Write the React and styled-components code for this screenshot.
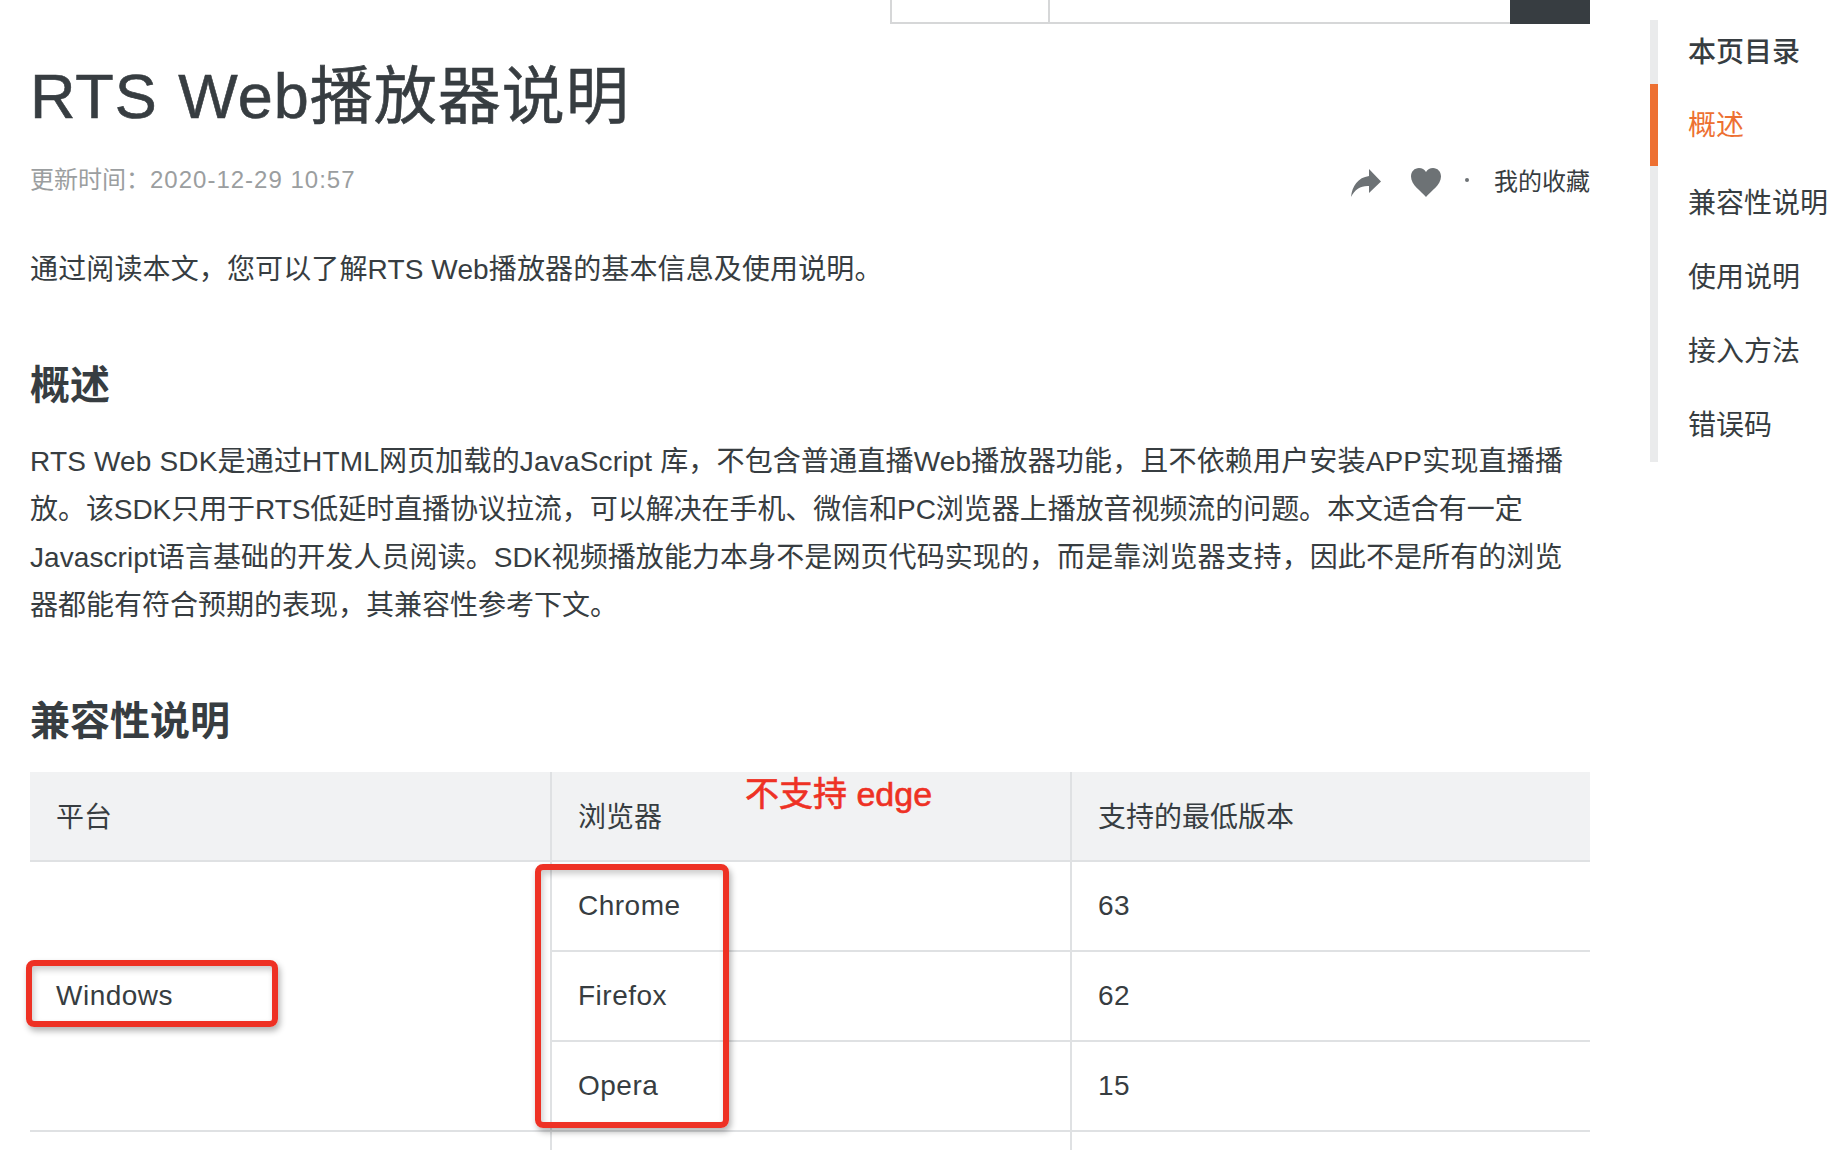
import React from "react"
import styled, { createGlobalStyle } from "styled-components"

const colors = {
  text: "#373d41",
  muted: "#9b9ea0",
  line: "#dfe1e3",
  head: "#f1f2f3",
  orange: "#ed7032",
  rail: "#eaebec",
  red: "#ee3124",
  icon: "#6d7275"
}

const GlobalStyle = createGlobalStyle`
  html, body {
    margin: 0;
    height: 1150px;
    overflow: hidden;
    background: #fff;
  }
  body {
    font-family: "Liberation Sans", "Noto Sans CJK SC", sans-serif;
    color: ${colors.text};
  }
`

const Page = styled.div`
  display: flex;
  align-items: flex-start;
  width: 1836px;
  height: 1150px;
  overflow: hidden;
`

const Main = styled.main`
  width: 1560px;
  margin-left: 30px;
  flex: none;
`

const SearchBar = styled.div`
  display: flex;
  justify-content: flex-end;
  height: 24px;
`

const SearchBox = styled.div`
  display: flex;
  width: 700px;
  height: 24px;
  box-sizing: border-box;
  border-left: 2px solid #d6d7d8;
  border-bottom: 2px solid #d6d7d8;
`

const SearchSelect = styled.div`
  width: 156px;
  border-right: 2px solid #d6d7d8;
`

const SearchInput = styled.div`
  flex: 1;
`

const SearchButton = styled.div`
  width: 80px;
  height: 24px;
  background: ${colors.text};
`

const Title = styled.h1`
  margin: 30px 0 0;
  font-size: 63px;
  line-height: 84px;
  font-weight: 400;
  letter-spacing: 1px;
  word-spacing: 2px;
  -webkit-text-stroke: 0.6px ${colors.text};
  white-space: nowrap;
`

const MetaRow = styled.div`
  display: flex;
  justify-content: space-between;
  align-items: center;
  margin-top: 19px;
  height: 40px;
`

const UpdateTime = styled.span`
  font-size: 24px;
  color: ${colors.muted};
`

const DateText = styled.span`
  letter-spacing: 1px;
`

const Actions = styled.div`
  display: flex;
  align-items: center;
  padding-top: 5px;
  font-size: 24px;
`

const ActionIcon = styled.svg`
  display: block;
  fill: ${colors.icon};
  margin-top: 6px;
  margin-right: ${(p) => p.$gap}px;
`

const Dot = styled.i`
  display: block;
  width: 4px;
  height: 4px;
  border-radius: 50%;
  background: ${colors.icon};
  margin-right: 25px;
`

const Intro = styled.p`
  margin: 49px 0 0;
  font-size: 28px;
  line-height: 48px;
  letter-spacing: 0.13px;
  white-space: nowrap;
`

const Heading = styled.h2`
  margin: 63px 0 0;
  font-size: 40px;
  line-height: 56px;
  font-weight: 700;
`

const Paragraph = styled.div`
  margin-top: 25px;
  font-size: 28px;
  line-height: 48px;
`

const Line = styled.div`
  white-space: nowrap;
  letter-spacing: ${(p) => p.$spacing || 0}px;
`

const TableWrap = styled.div`
  position: relative;
  margin-top: 23px;
`

const Table = styled.table`
  width: 1560px;
  table-layout: fixed;
  border-collapse: collapse;
  font-size: 28px;
`

const HeadCell = styled.th`
  width: ${(p) => p.$w}px;
  height: 89px;
  padding: 0 26px 3px;
  box-sizing: border-box;
  background: ${colors.head};
  font-weight: 400;
  text-align: left;
  border-bottom: 2px solid ${colors.line};
  & + & {
    border-left: 2px solid ${colors.line};
  }
`

const Cell = styled.td`
  height: 90px;
  padding: 0 26px;
  box-sizing: border-box;
  letter-spacing: 0.5px;
  border-bottom: 2px solid ${colors.line};
  border-left: ${(p) => (p.$first ? "none" : `2px solid ${colors.line}`)};
`

const Highlight = styled.div`
  position: absolute;
  left: ${(p) => p.$x}px;
  top: ${(p) => p.$y}px;
  width: ${(p) => p.$w}px;
  height: ${(p) => p.$h}px;
  box-sizing: border-box;
  border: 6px solid ${colors.red};
  border-radius: 8px;
  box-shadow: 2px 4px 6px rgba(0, 0, 0, 0.3), inset 2px 4px 6px rgba(0, 0, 0, 0.2);
`

const Note = styled.div`
  position: absolute;
  left: 715px;
  top: -1px;
  font-size: 34px;
  line-height: 46px;
  color: ${colors.red};
  white-space: nowrap;
  -webkit-text-stroke: 0.6px ${colors.red};
`

const Toc = styled.nav`
  width: 186px;
  height: 442px;
  margin: 20px 0 0 60px;
  flex: none;
  box-sizing: border-box;
  background: linear-gradient(${colors.rail}, ${colors.rail}) left / 8px 100% no-repeat;
`

const TocItem = styled.div`
  height: ${(p) => p.$h}px;
  padding: 0 0 4px 30px;
  box-sizing: border-box;
  display: flex;
  align-items: center;
  font-size: 28px;
  white-space: nowrap;
  color: ${(p) => (p.$active ? colors.orange : colors.text)};
  font-weight: ${(p) => (p.$strong ? 500 : 400)};
  border-left: 8px solid ${(p) => (p.$active ? colors.orange : "transparent")};
`

const rows = [
  ["Chrome", "63"],
  ["Firefox", "62"],
  ["Opera", "15"]
]

const toc = [
  { label: "本页目录", h: 64, strong: true },
  { label: "概述", h: 82, active: true },
  { label: "兼容性说明", h: 74 },
  { label: "使用说明", h: 74 },
  { label: "接入方法", h: 74 },
  { label: "错误码", h: 74 }
]

export default function App() {
  return (
    <Page>
      <GlobalStyle />
      <Main>
        <SearchBar>
          <SearchBox>
            <SearchSelect />
            <SearchInput />
            <SearchButton />
          </SearchBox>
        </SearchBar>

        <Title>RTS Web播放器说明</Title>

        <MetaRow>
          <UpdateTime>
            更新时间：<DateText>2020-12-29 10:57</DateText>
          </UpdateTime>
          <Actions>
            <ActionIcon $gap={30} width="30" height="28" viewBox="0 0 30 28">
              <path d="M18 0 L30 12.5 L18 24 L18 17 C10 16.5 4 20 0 28 C1 17 7 8.5 18 7 Z" />
            </ActionIcon>
            <ActionIcon $gap={24} width="30" height="29" viewBox="0 0 30 29">
              <path d="M15 29 C10 23 0 17 0 8.5 C0 3.5 3.5 0 8 0 C11 0 13.500 1.500 15 4 C16.500 1.500 19 0 22 0 C26.500 0 30 3.500 30 8.500 C30 17 20 23 15 29 Z" />
            </ActionIcon>
            <Dot />
            <span>我的收藏</span>
          </Actions>
        </MetaRow>

        <Intro>通过阅读本文，您可以了解RTS Web播放器的基本信息及使用说明。</Intro>

        <Heading>概述</Heading>
        <Paragraph>
          <Line $spacing={0.17}>RTS Web SDK是通过HTML网页加载的JavaScript 库，不包含普通直播Web播放器功能，且不依赖用户安装APP实现直播播</Line>
          <Line $spacing={-0.06}>放。该SDK只用于RTS低延时直播协议拉流，可以解决在手机、微信和PC浏览器上播放音视频流的问题。本文适合有一定</Line>
          <Line $spacing={0.08}>Javascript语言基础的开发人员阅读。SDK视频播放能力本身不是网页代码实现的，而是靠浏览器支持，因此不是所有的浏览</Line>
          <Line>器都能有符合预期的表现，其兼容性参考下文。</Line>
        </Paragraph>

        <Heading>兼容性说明</Heading>
        <TableWrap>
          <Table>
            <thead>
              <tr>
                <HeadCell $w={521}>平台</HeadCell>
                <HeadCell $w={520}>浏览器</HeadCell>
                <HeadCell $w={519}>支持的最低版本</HeadCell>
              </tr>
            </thead>
            <tbody>
              {rows.map(([browser, version], index) => (
                <tr key={browser}>
                  {index === 0 && (
                    <Cell $first rowSpan={3}>
                      Windows
                    </Cell>
                  )}
                  <Cell>{browser}</Cell>
                  <Cell>{version}</Cell>
                </tr>
              ))}
              <tr>
                <Cell $first />
                <Cell />
                <Cell />
              </tr>
            </tbody>
          </Table>
          <Note>不支持 edge</Note>
          <Highlight $x={-4} $y={188} $w={252} $h={67} />
          <Highlight $x={505} $y={92} $w={194} $h={264} />
        </TableWrap>
      </Main>

      <Toc>
        {toc.map((item) => (
          <TocItem key={item.label} $h={item.h} $active={item.active} $strong={item.strong}>
            {item.label}
          </TocItem>
        ))}
      </Toc>
    </Page>
  )
}
